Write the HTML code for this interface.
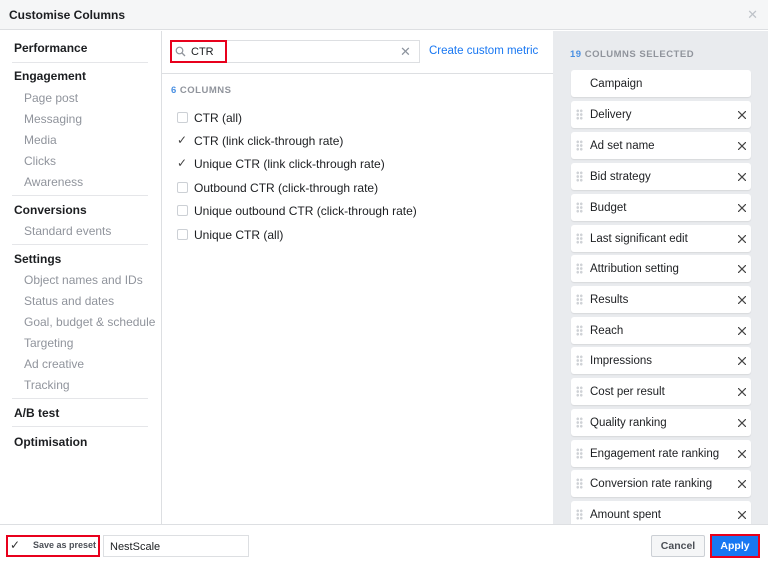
<!DOCTYPE html>
<html><head><style>
*{box-sizing:border-box;margin:0;padding:0}
body{width:768px;height:566px;overflow:hidden;font-family:"Liberation Sans",sans-serif;background:#fff;position:relative;color:#1c1e21}
.abs{position:absolute}
.hdr{left:0;top:0;width:768px;height:30px;background:#f5f6f7;border-bottom:1px solid #dddfe2}
.hdr b{position:absolute;left:9px;top:8px;font-size:12px;color:#1c1e21}
.side{left:0;top:31px;width:162px;height:493px;border-right:1px solid #dddfe2}
.h{position:absolute;left:14px;font-size:12px;font-weight:bold;color:#1c1e21}
.s{position:absolute;left:24px;font-size:12px;color:#90949c}
.sep{position:absolute;left:12px;width:136px;height:1px;background:#e5e6e9}
.right{left:553px;top:31px;width:215px;height:493px;background:#e9ebee}
.item{position:absolute;left:571px;width:180px;height:27px;background:#fff;border-radius:3px;font-size:11.5px;line-height:29px;padding-left:19px;box-shadow:0 1px 1px rgba(0,0,0,.08)}
.item .g{position:absolute;left:5px;top:8px;width:7px;height:11px;background:radial-gradient(circle,#cfd2d6 1.2px,transparent 1.5px) 0 0/3.5px 3.7px}
.item svg{position:absolute;right:5px;top:10px}
.row{position:absolute;left:177px;font-size:12px;color:#1c1e21}
.cb{position:absolute;left:0;top:1px;width:11px;height:11px;border:1px solid #ccd0d5;border-radius:2px;background:#fff}
.ck{position:absolute;left:0;top:-1px;font-size:12px;color:#444}
.row span{position:absolute;left:17px;white-space:nowrap}
.foot{left:0;top:524px;width:768px;height:42px;border-top:1px solid #dddfe2;background:#fff}
</style></head><body>
<div class="abs hdr"><b>Customise Columns</b><span style="position:absolute;right:10px;top:7px;font-size:13px;color:#bec3c9">✕</span></div>
<div class="abs side"></div>
<div class="h" style="top:41px">Performance</div>
<div class="sep" style="top:62px"></div>
<div class="h" style="top:69px">Engagement</div>
<div class="s" style="top:91px">Page post</div>
<div class="s" style="top:112px">Messaging</div>
<div class="s" style="top:133px">Media</div>
<div class="s" style="top:154px">Clicks</div>
<div class="s" style="top:175px">Awareness</div>
<div class="sep" style="top:195px"></div>
<div class="h" style="top:203px">Conversions</div>
<div class="s" style="top:224px">Standard events</div>
<div class="sep" style="top:244px"></div>
<div class="h" style="top:252px">Settings</div>
<div class="s" style="top:273px">Object names and IDs</div>
<div class="s" style="top:294px">Status and dates</div>
<div class="s" style="top:315px">Goal, budget &amp; schedule</div>
<div class="s" style="top:336px">Targeting</div>
<div class="s" style="top:357px">Ad creative</div>
<div class="s" style="top:378px">Tracking</div>
<div class="sep" style="top:398px"></div>
<div class="h" style="top:406px">A/B test</div>
<div class="sep" style="top:426px"></div>
<div class="h" style="top:435px">Optimisation</div>

<div class="abs" style="left:170px;top:40px;width:250px;height:23px;border:1px solid #dddfe2;background:#fff"></div>
<div class="abs" style="left:170px;top:40px;width:57px;height:23px;border:2px solid #e8001c"></div>
<svg class="abs" style="left:175px;top:46px" width="11" height="11" viewBox="0 0 11 11"><circle cx="4.5" cy="4.5" r="3.3" fill="none" stroke="#90949c" stroke-width="1.2"/><path d="M7 7l3 3" stroke="#90949c" stroke-width="1.3"/></svg>
<div class="abs" style="left:191px;top:46px;font-size:11px">CTR</div>
<div class="abs" style="left:400px;top:44px;font-size:13px;color:#8d949e">✕</div>
<div class="abs" style="left:429px;top:45px;font-size:11.5px;color:#1877f2">Create custom metric</div>
<div class="abs" style="left:162px;top:73px;width:391px;height:1px;background:#dddfe2"></div>
<div class="abs" style="left:171px;top:85px;font-size:9.5px;font-weight:bold;color:#90949c;letter-spacing:.5px"><span style="color:#4a90e2">6</span> COLUMNS</div>
<div class="row" style="top:111px"><div class="cb"></div><span>CTR (all)</span></div>
<div class="row" style="top:134px"><div class="ck">✓</div><span>CTR (link click-through rate)</span></div>
<div class="row" style="top:157px"><div class="ck">✓</div><span>Unique CTR (link click-through rate)</span></div>
<div class="row" style="top:181px"><div class="cb"></div><span>Outbound CTR (click-through rate)</span></div>
<div class="row" style="top:204px"><div class="cb"></div><span>Unique outbound CTR (click-through rate)</span></div>
<div class="row" style="top:228px"><div class="cb"></div><span>Unique CTR (all)</span></div>

<div class="abs right"></div>
<div class="abs" style="left:570px;top:49px;font-size:9.5px;font-weight:bold;color:#90949c;letter-spacing:.5px"><span style="color:#4a90e2">19</span> COLUMNS SELECTED</div>
<div class="item" style="top:70px">Campaign</div>
<div class="item" style="top:101px"><i class="g"></i>Delivery<svg width="8" height="8"><path d="M0 0L8 8M8 0L0 8" stroke="#444" stroke-width="1.2"/></svg></div>
<div class="item" style="top:132px"><i class="g"></i>Ad set name<svg width="8" height="8"><path d="M0 0L8 8M8 0L0 8" stroke="#444" stroke-width="1.2"/></svg></div>
<div class="item" style="top:163px"><i class="g"></i>Bid strategy<svg width="8" height="8"><path d="M0 0L8 8M8 0L0 8" stroke="#444" stroke-width="1.2"/></svg></div>
<div class="item" style="top:194px"><i class="g"></i>Budget<svg width="8" height="8"><path d="M0 0L8 8M8 0L0 8" stroke="#444" stroke-width="1.2"/></svg></div>
<div class="item" style="top:225px"><i class="g"></i>Last significant edit<svg width="8" height="8"><path d="M0 0L8 8M8 0L0 8" stroke="#444" stroke-width="1.2"/></svg></div>
<div class="item" style="top:255px"><i class="g"></i>Attribution setting<svg width="8" height="8"><path d="M0 0L8 8M8 0L0 8" stroke="#444" stroke-width="1.2"/></svg></div>
<div class="item" style="top:286px"><i class="g"></i>Results<svg width="8" height="8"><path d="M0 0L8 8M8 0L0 8" stroke="#444" stroke-width="1.2"/></svg></div>
<div class="item" style="top:317px"><i class="g"></i>Reach<svg width="8" height="8"><path d="M0 0L8 8M8 0L0 8" stroke="#444" stroke-width="1.2"/></svg></div>
<div class="item" style="top:347px"><i class="g"></i>Impressions<svg width="8" height="8"><path d="M0 0L8 8M8 0L0 8" stroke="#444" stroke-width="1.2"/></svg></div>
<div class="item" style="top:378px"><i class="g"></i>Cost per result<svg width="8" height="8"><path d="M0 0L8 8M8 0L0 8" stroke="#444" stroke-width="1.2"/></svg></div>
<div class="item" style="top:409px"><i class="g"></i>Quality ranking<svg width="8" height="8"><path d="M0 0L8 8M8 0L0 8" stroke="#444" stroke-width="1.2"/></svg></div>
<div class="item" style="top:440px"><i class="g"></i>Engagement rate ranking<svg width="8" height="8"><path d="M0 0L8 8M8 0L0 8" stroke="#444" stroke-width="1.2"/></svg></div>
<div class="item" style="top:470px"><i class="g"></i>Conversion rate ranking<svg width="8" height="8"><path d="M0 0L8 8M8 0L0 8" stroke="#444" stroke-width="1.2"/></svg></div>
<div class="item" style="top:501px"><i class="g"></i>Amount spent<svg width="8" height="8"><path d="M0 0L8 8M8 0L0 8" stroke="#444" stroke-width="1.2"/></svg></div>

<div class="abs foot"></div>
<div class="abs" style="left:6px;top:535px;width:94px;height:22px;border:2px solid #e8001c;background:#fff"></div>
<div class="abs" style="left:10px;top:538px;font-size:12px;color:#333">✓</div>
<div class="abs" style="left:33px;top:540px;font-size:9px;font-weight:bold;color:#4b4f56;white-space:nowrap">Save as preset</div>
<div class="abs" style="left:103px;top:535px;width:146px;height:22px;border:1px solid #dddfe2;font-size:11px;padding:5px 6px;color:#1c1e21">NestScale</div>
<div class="abs" style="left:651px;top:535px;width:54px;height:22px;border:1px solid #ccd0d5;background:#f5f6f7;border-radius:2px;font-size:10.5px;font-weight:bold;color:#4b4f56;text-align:center;line-height:20px">Cancel</div>
<div class="abs" style="left:710px;top:534px;width:50px;height:24px;border:2px solid #e8001c;background:#1877f2;font-size:10.5px;font-weight:bold;color:#fff;text-align:center;line-height:20px">Apply</div>
</body></html>
